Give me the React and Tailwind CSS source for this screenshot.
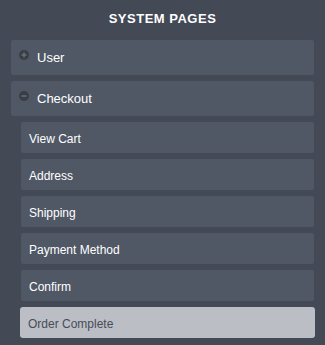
import React from 'react';

const Icon = ({ open }) => (
  <svg width="10" height="10" viewBox="0 0 10 10" className="shrink-0 -mt-[6px]">
    <circle cx="5" cy="5" r="5" fill="#3a3e46" />
    <rect x="2.5" y="4.3" width="5" height="1.4" fill="#6b717c" />
    {!open && <rect x="4.3" y="2.5" width="1.4" height="5" fill="#6b717c" />}
  </svg>
);

const subItems = ['View Cart', 'Address', 'Shipping', 'Payment Method', 'Confirm'];

const App = () => {
  return (
    <div
      className="w-[325px] h-[345px] bg-[#434955] overflow-hidden"
      style={{ fontFamily: '"Liberation Sans", Arial, sans-serif' }}
    >
      <div className="pt-[10px] pb-[10px] text-center text-white font-bold text-[13px] tracking-[0.5px] leading-[18px]">
        SYSTEM PAGES
      </div>
      <div className="px-[11px] pt-[2px] flex flex-col gap-[6px]">
        <div className="h-[35px] bg-[#505866] rounded-[2px] flex items-center pl-[8px] text-white text-[13px]">
          <Icon open={false} />
          <span className="ml-[8px]">User</span>
        </div>
        <div className="h-[35px] bg-[#505866] rounded-[2px] flex items-center pl-[8px] text-white text-[13px]">
          <Icon open={true} />
          <span className="ml-[8px]">Checkout</span>
        </div>
        <div className="pl-[10px] flex flex-col gap-[6px]">
          {subItems.map((s) => (
            <div
              key={s}
              className="h-[31px] bg-[#505866] rounded-[2px] flex items-center pl-[8px] pt-[2px] text-white text-[12px]"
            >
              {s}
            </div>
          ))}
          <div className="h-[31px] -mx-px bg-[#bcbec5] rounded-[3px] flex items-center pl-[8px] pt-[2px] text-[#474c57] text-[12px]">
            Order Complete
          </div>
        </div>
      </div>
    </div>
  );
};

export default App;
